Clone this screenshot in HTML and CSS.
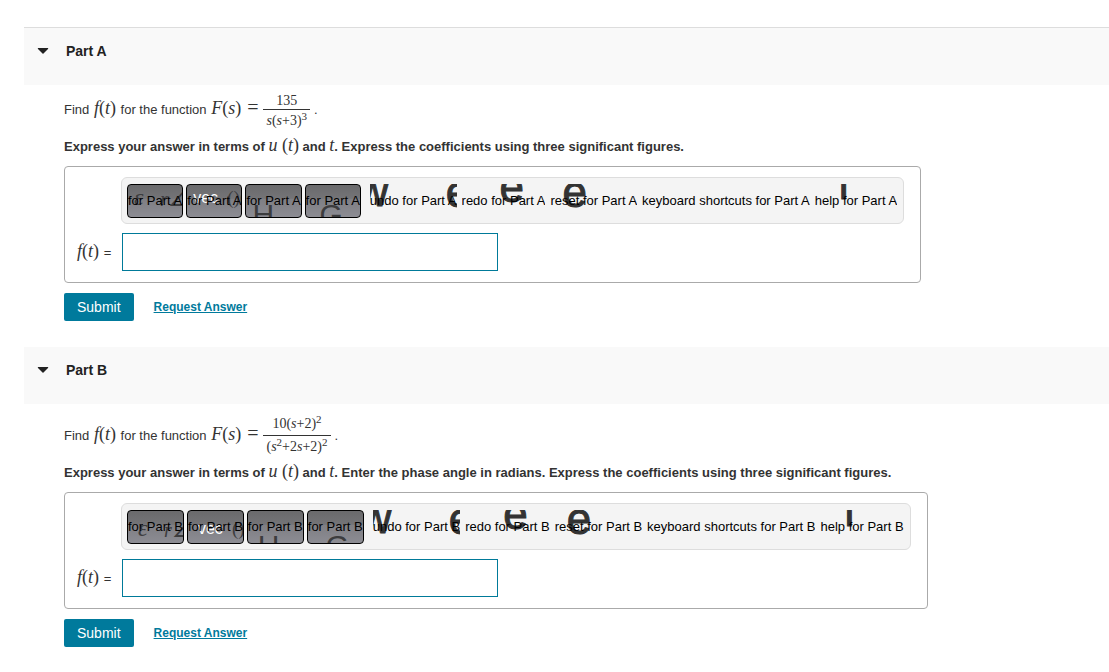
FILE: index.html
```html
<!DOCTYPE html>
<html lang="en">
<head>
<meta charset="utf-8">
<title>Inverse Laplace transforms</title>
<link rel="stylesheet" href="styles.css">
</head>
<body>
<main class="page">
  <section class="part part-a">
    <header class="part-header">
      <svg class="caret" viewBox="0 0 12 6" aria-hidden="true"><path d="M1 0H11Q11.500 .5 11 1L6.500 5.500Q6 6 5.500 5.500L1 1Q.5 .5 1 0Z"/></svg>
      <h2>Part A</h2>
    </header>
    <div class="part-body">
      <div class="question">
        <span>Find <span class="math"><i>f</i>(<i>t</i>)</span> for the function <span class="math"><i>F</i>(<i>s</i>)<span class="eq">=</span></span></span>
        <span class="frac"><span class="num">135</span><span class="den"><i>s</i>(<i>s</i>+3)<sup>3</sup></span></span><span class="stop">.</span>
      </div>
      <p class="instruction">Express your answer in terms of <span class="math"><i>u</i> (<i>t</i>)</span> and <span class="math"><i>t</i></span>. Express the coefficients using three significant figures.</p>
      <form class="answer">
        <div class="toolbar">
          <button type="button" class="tool key"><span class="glyph greek"><i>ε</i></span><span class="glyph root"><i>r∠</i>(</span><span class="name">for Part A</span></button>
          <button type="button" class="tool key"><span class="glyph vec">vec</span><span class="glyph parens">()(</span><span class="name">for Part A</span></button>
          <button type="button" class="tool key"><span class="glyph letter-h">H</span><span class="name">for Part A</span></button>
          <button type="button" class="tool key"><span class="glyph letter-g">G</span><span class="name">for Part A</span></button>
          <button type="button" class="tool undo"><span class="glyph big w">w</span><span class="glyph big e1">e</span><span class="name">undo for Part A</span></button>
          <button type="button" class="tool"><span class="glyph big e2">e</span><span class="name">redo for Part A</span></button>
          <button type="button" class="tool"><span class="glyph big e3">e</span><span class="name">reset for Part A</span></button>
          <button type="button" class="tool"><span class="name">keyboard shortcuts for Part A</span></button>
          <button type="button" class="tool"><span class="glyph big bar">l</span><span class="name">help for Part A</span></button>
        </div>
        <label for="answer-a"><span class="math"><i>f</i>(<i>t</i>)</span> =</label>
        <input id="answer-a" type="text">
      </form>
      <div class="actions">
        <button type="button" class="submit">Submit</button>
        <a href="#answer-a">Request Answer</a>
      </div>
    </div>
  </section>
  <section class="part part-b">
    <header class="part-header">
      <svg class="caret" viewBox="0 0 12 6" aria-hidden="true"><path d="M1 0H11Q11.500 .5 11 1L6.500 5.500Q6 6 5.500 5.500L1 1Q.5 .5 1 0Z"/></svg>
      <h2>Part B</h2>
    </header>
    <div class="part-body">
      <div class="question">
        <span>Find <span class="math"><i>f</i>(<i>t</i>)</span> for the function <span class="math"><i>F</i>(<i>s</i>)<span class="eq">=</span></span></span>
        <span class="frac"><span class="num">10(<i>s</i>+2)<sup>2</sup></span><span class="den">(<i>s</i><sup>2</sup>+2<i>s</i>+2)<sup>2</sup></span></span><span class="stop">.</span>
      </div>
      <p class="instruction">Express your answer in terms of <span class="math"><i>u</i> (<i>t</i>)</span> and <span class="math"><i>t</i></span>. Enter the phase angle in radians. Express the coefficients using three significant figures.</p>
      <form class="answer">
        <div class="toolbar">
          <button type="button" class="tool key"><span class="glyph greek"><i>ε</i></span><span class="glyph root"><i>r∠</i>(</span><span class="name">for Part B</span></button>
          <button type="button" class="tool key"><span class="glyph vec">vec</span><span class="glyph parens">()(</span><span class="name">for Part B</span></button>
          <button type="button" class="tool key"><span class="glyph letter-h">H</span><span class="name">for Part B</span></button>
          <button type="button" class="tool key"><span class="glyph letter-g">G</span><span class="name">for Part B</span></button>
          <button type="button" class="tool undo"><span class="glyph big w">w</span><span class="glyph big e1">e</span><span class="name">undo for Part B</span></button>
          <button type="button" class="tool"><span class="glyph big e2">e</span><span class="name">redo for Part B</span></button>
          <button type="button" class="tool"><span class="glyph big e3">e</span><span class="name">reset for Part B</span></button>
          <button type="button" class="tool"><span class="name">keyboard shortcuts for Part B</span></button>
          <button type="button" class="tool"><span class="glyph big bar">l</span><span class="name">help for Part B</span></button>
        </div>
        <label for="answer-b"><span class="math"><i>f</i>(<i>t</i>)</span> =</label>
        <input id="answer-b" type="text">
      </form>
      <div class="actions">
        <button type="button" class="submit">Submit</button>
        <a href="#answer-b">Request Answer</a>
      </div>
    </div>
  </section>
</main>
</body>
</html>
```
FILE: styles.css
```css
* { box-sizing: border-box; }
body {
  margin: 0;
  background: #fff;
  color: #333;
  font: 13px/20px "Liberation Sans", Arial, sans-serif;
}
.page { padding: 27px 0 0 24px; }
.part-header {
  display: flex;
  align-items: flex-start;
  gap: 17px;
  height: 57px;
  padding: 13px 0 0 13px;
  background: #f9f9f9;
  color: #222;
}
.part-a .part-header { height: 58px; border-top: 1px solid #ddd; }
.caret { width: 12px; height: 6px; margin-top: 7px; fill: #222; }
h2 { margin: 0; font-size: 14px; line-height: 20px; }
.part-body { padding: 3px 16px 26px 40px; }
.part-b .part-body { padding-top: 9px; }

.math {
  padding: 0 1px;
  font-family: "Liberation Serif", "Times New Roman", serif;
  font-size: 18px;
  font-weight: normal;
  line-height: 1;
}
.eq { margin-left: 6px; font-size: 20px; }
.question { display: flex; align-items: flex-end; gap: 4px; line-height: 44px; white-space: nowrap; }
.frac {
  display: flex;
  flex-direction: column;
  align-items: center;
  font: 14px/22px "Liberation Serif", "Times New Roman", serif;
}
.frac .num { line-height: 16px; }
.part-b .num { line-height: 22px; }
.frac .den { border-top: 1px solid #333; padding: 0 3px; }
.frac sup { font-size: 11px; line-height: 0; vertical-align: 5px; }
.instruction { margin: 4px 0 9px; font-weight: bold; }
.instruction .math { padding: 0; }

.answer {
  display: grid;
  grid-template-columns: 44px auto;
  row-gap: 9px;
  width: max-content;
  padding: 10px 16px 11px 12px;
  border: 1px solid #aaa;
  border-radius: 4px;
  align-items: center;
}
.toolbar {
  grid-column: 2;
  display: flex;
  gap: 3px;
  height: 47px;
  padding: 6px 5px;
  border: 1px solid #ddd;
  border-radius: 6px;
  background: #f4f4f4;
}
.tool {
  position: relative;
  height: 34px;
  padding: 0;
  border: 1px solid transparent;
  border-width: 0 1px;
  background: none;
  color: #000;
  font: 13px/34px "Liberation Sans", Arial, sans-serif;
  white-space: nowrap;
  overflow: hidden;
}
.key {
  border: 1px solid #000;
  border-radius: 4px;
  background: linear-gradient(#6a6a6c, #747477 42%, #7e7e83 43%, #8c8c93);
  line-height: 32px;
}
.undo { margin-left: 5px; }
.name { position: relative; }

/* Oversized symbols that lie behind the tool names. */
.part-a { --key-x: 0px; --key-y: 0px; --tool-y: 0px; }
.part-b { --key-x: 4px; --key-y: 5px; --tool-y: 1px; }
.glyph {
  position: absolute;
  left: calc(var(--x) + var(--key-x));
  top: calc(var(--y) + var(--key-y));
  color: #3c3c3e;
  line-height: 1;
}
.greek { --x: 6px; --y: 0px; font: 24px/1 "Liberation Serif", serif; }
.root { --x: 32px; --y: 4px; font: 20px/1 "Liberation Serif", serif; }
.vec { --x: 6px; --y: 5px; color: #fff; font-size: 16px; }
.parens { --x: 40px; --y: 3px; font: 19px/1 "Liberation Serif", serif; }
.letter-h { --x: 6px; --y: 15px; font-size: 30px; }
.letter-g { --x: 14px; --y: 15px; font-size: 30px; }
.big {
  left: var(--x);
  top: calc(var(--y) + var(--tool-y));
  color: #333;
  font-size: 44px;
  -webkit-text-stroke: 1px #333;
}
.w { --x: -13px; --y: -15px; }
.e1 { --x: 76px; --y: -14px; }
.e2 { --x: 38px; --y: -19px; }
.e3 { --x: 12px; --y: -14px; }
.bar { --x: 24px; --y: -22px; }

label { grid-column: 1; white-space: nowrap; }
label .math { padding: 0 1px 0 0; }
.answer input {
  width: 376px;
  height: 38px;
  margin: 0 0 0 1px;
  padding: 0 8px;
  border: 1px solid #007a99;
  background: #fff;
  font: 16px "Liberation Sans", Arial, sans-serif;
}
.actions { display: flex; gap: 20px; margin-top: 10px; line-height: 28px; }
.submit {
  height: 28px;
  padding: 0 13px;
  border: 0;
  border-radius: 2px;
  background: #007a9c;
  color: #fff;
  font: 14px/28px "Liberation Sans", Arial, sans-serif;
}
.actions a { color: #007a9c; font-size: 12px; font-weight: bold; }
```
